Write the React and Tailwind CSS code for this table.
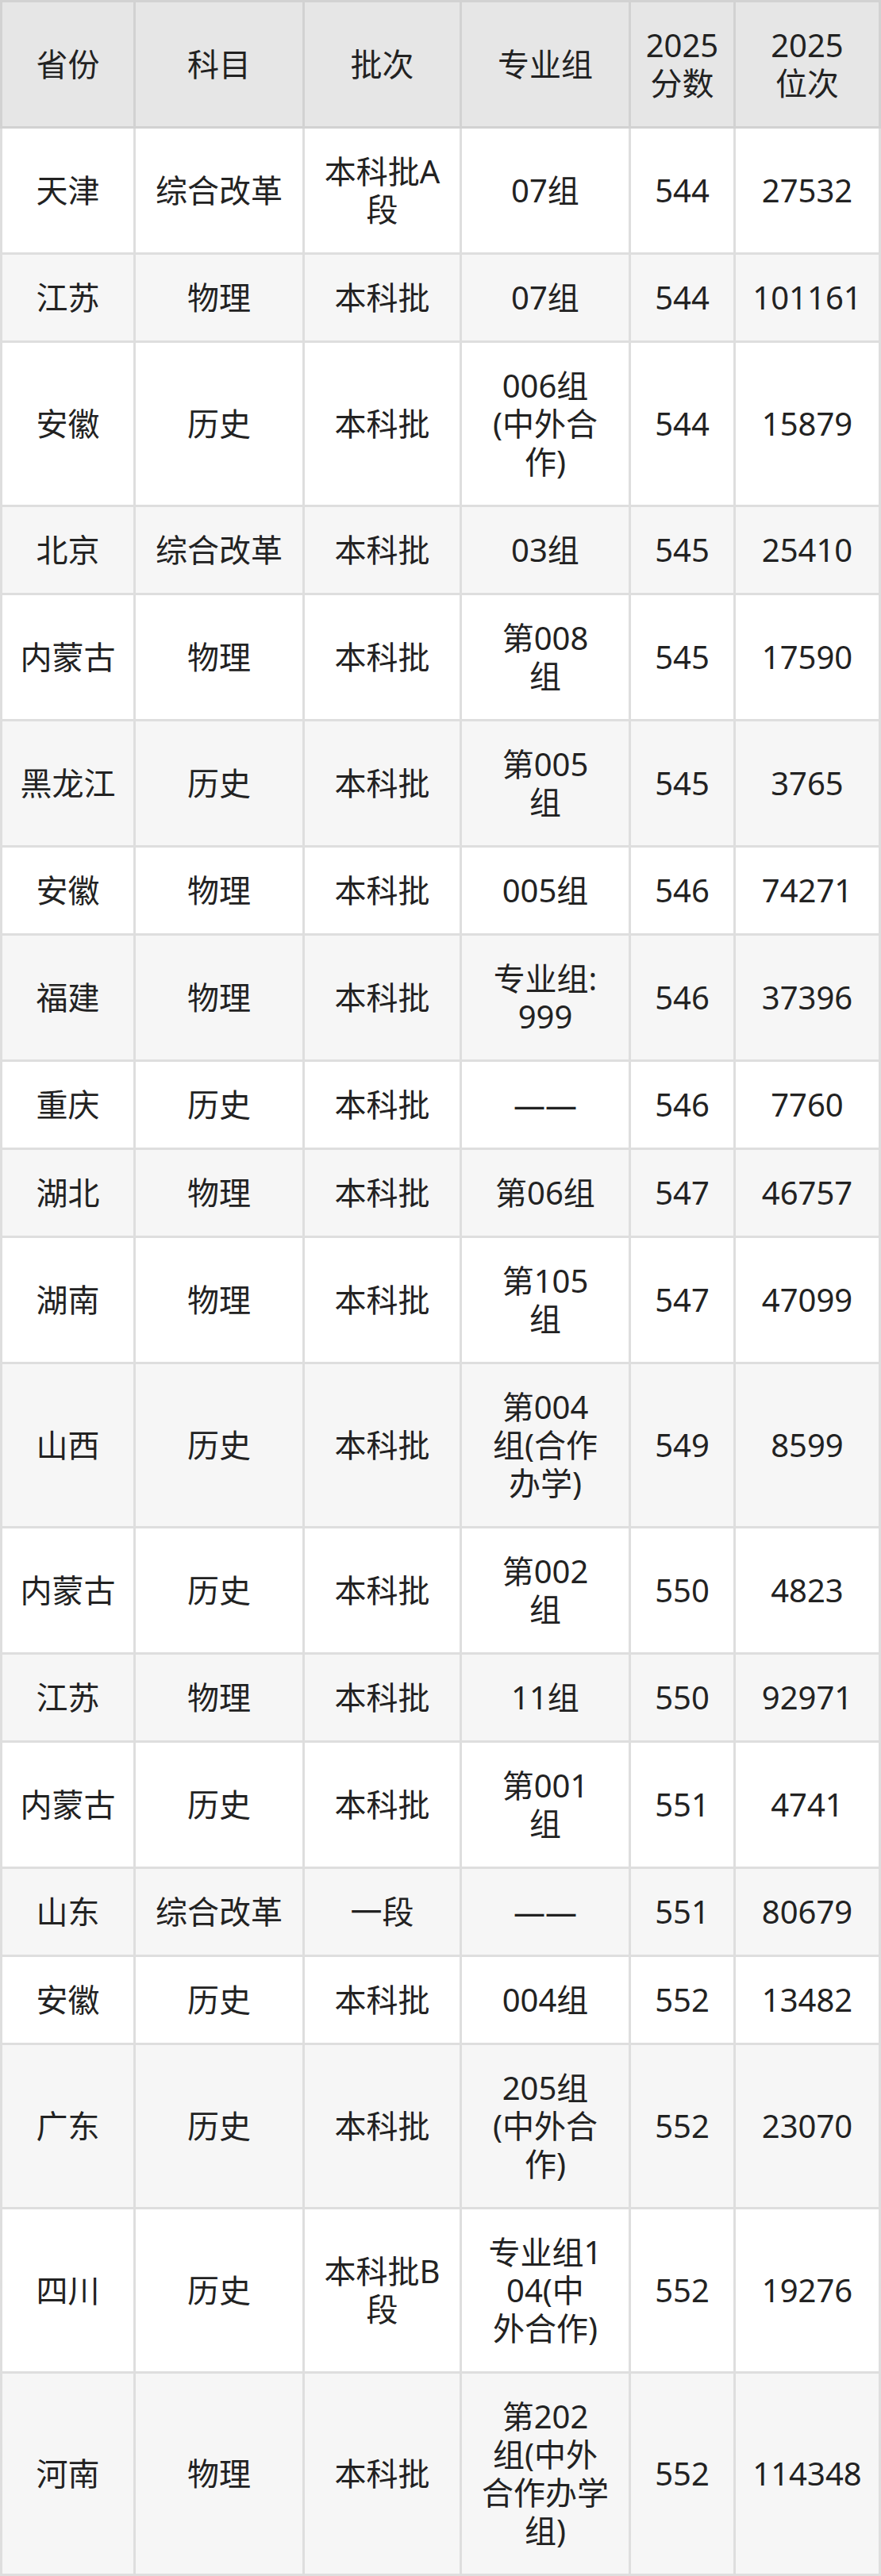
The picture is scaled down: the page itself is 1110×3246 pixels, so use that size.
const headers = [["省份"], ["科目"], ["批次"], ["专业组"], ["2025", "分数"], ["2025", "位次"]];

// each cell is a list of lines, broken the way the original table wraps them
const rows = [
  [["天津"], ["综合改革"], ["本科批A", "段"], ["07组"], ["544"], ["27532"]],
  [["江苏"], ["物理"], ["本科批"], ["07组"], ["544"], ["101161"]],
  [["安徽"], ["历史"], ["本科批"], ["006组", "(中外合", "作)"], ["544"], ["15879"]],
  [["北京"], ["综合改革"], ["本科批"], ["03组"], ["545"], ["25410"]],
  [["内蒙古"], ["物理"], ["本科批"], ["第008", "组"], ["545"], ["17590"]],
  [["黑龙江"], ["历史"], ["本科批"], ["第005", "组"], ["545"], ["3765"]],
  [["安徽"], ["物理"], ["本科批"], ["005组"], ["546"], ["74271"]],
  [["福建"], ["物理"], ["本科批"], ["专业组:", "999"], ["546"], ["37396"]],
  [["重庆"], ["历史"], ["本科批"], ["——"], ["546"], ["7760"]],
  [["湖北"], ["物理"], ["本科批"], ["第06组"], ["547"], ["46757"]],
  [["湖南"], ["物理"], ["本科批"], ["第105", "组"], ["547"], ["47099"]],
  [["山西"], ["历史"], ["本科批"], ["第004", "组(合作", "办学)"], ["549"], ["8599"]],
  [["内蒙古"], ["历史"], ["本科批"], ["第002", "组"], ["550"], ["4823"]],
  [["江苏"], ["物理"], ["本科批"], ["11组"], ["550"], ["92971"]],
  [["内蒙古"], ["历史"], ["本科批"], ["第001", "组"], ["551"], ["4741"]],
  [["山东"], ["综合改革"], ["一段"], ["——"], ["551"], ["80679"]],
  [["安徽"], ["历史"], ["本科批"], ["004组"], ["552"], ["13482"]],
  [["广东"], ["历史"], ["本科批"], ["205组", "(中外合", "作)"], ["552"], ["23070"]],
  [["四川"], ["历史"], ["本科批B", "段"], ["专业组1", "04(中", "外合作)"], ["552"], ["19276"]],
  [["河南"], ["物理"], ["本科批"], ["第202", "组(中外", "合作办学", "组)"], ["552"], ["114348"]],
];

function Lines({ lines }) {
  return lines.map((line, i) => (
    <span key={i} className="block">
      {line}
    </span>
  ));
}

export default function App() {
  return (
    <div className="w-[1110px] bg-white text-[#222] font-['Noto_Sans','Noto_Sans_CJK_SC',sans-serif]">
      <table className="w-[1110px] table-fixed border-collapse text-center text-[40px] leading-[48px]">
        <colgroup>
          <col className="w-[168px]" />
          <col className="w-[213px]" />
          <col className="w-[198px]" />
          <col className="w-[213px]" />
          <col className="w-[132px]" />
          <col className="w-[183px]" />
        </colgroup>
        <thead>
          <tr className="bg-[#e6e6e6]">
            {headers.map((h, i) => (
              <th
                key={i}
                className="border-[3px] border-[#d2d2d2] px-1 py-[30px] align-middle font-normal whitespace-nowrap"
              >
                <Lines lines={h} />
              </th>
            ))}
          </tr>
        </thead>
        <tbody>
          {rows.map((row, r) => (
            <tr key={r} className={r % 2 === 1 ? "bg-[#f6f6f6]" : "bg-white"}>
              {row.map((cell, c) => (
                <td
                  key={c}
                  className="border-[3px] border-[#dedede] px-1 py-[30px] align-middle whitespace-nowrap"
                >
                  <Lines lines={cell} />
                </td>
              ))}
            </tr>
          ))}
        </tbody>
      </table>
    </div>
  );
}
